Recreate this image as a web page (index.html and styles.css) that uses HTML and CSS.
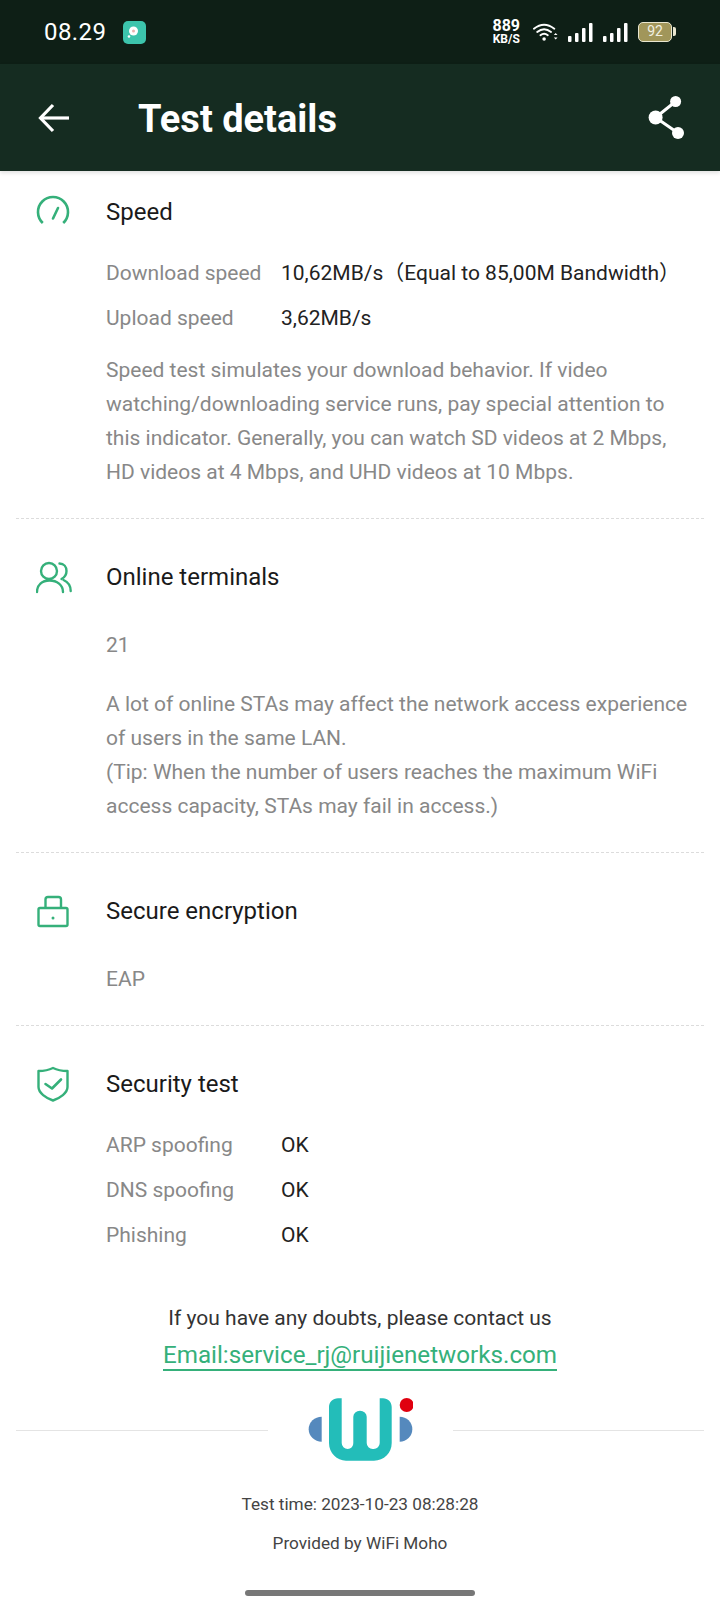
FILE: index.html
```html
<!DOCTYPE html>
<html lang="en">
<head>
  <meta charset="UTF-8">
  <title>Test details</title>
  <link rel="stylesheet" href="styles.css">
</head>
<body>
  <div class="status-bar">
    <div class="status-left">
      <span class="clock">08.29</span>
      <svg class="app-dot" width="23" height="23" viewBox="0 0 23 23">
        <rect width="23" height="23" rx="5" fill="#3cc4ac"/>
        <circle cx="10.500" cy="10" r="4.500" fill="#fff"/>
        <circle cx="10.500" cy="10" r="1.500" fill="#e8b4b0"/>
        <circle cx="6" cy="15.500" r="1.300" fill="#fff"/>
      </svg>
    </div>
    <div class="status-right">
      <div class="net-speed"><span>889</span><span class="net-unit">KB/S</span></div>
      <svg class="wifi" width="25" height="19" viewBox="0 0 27 20" fill="none" stroke="#fff" stroke-linecap="round">
        <path d="M1 6C8 0.500 16 0.500 23 6" stroke-width="2"/>
        <path d="M4.500 9.500C9.500 5.500 14.500 5.500 19.500 9.500" stroke-width="2"/>
        <path d="M8 13C10.500 11 13.500 11 16 13" stroke-width="2"/>
        <circle cx="12" cy="17" r="1.900" fill="#fff" stroke="none"/>
        <path d="M24.500 10.500l-2 2.200h4zM24.500 17.500l-2-2.200h4z" fill="#fff" stroke="none"/>
      </svg>
      <svg width="25" height="19" viewBox="0 0 25 19" fill="#fff">
        <rect x="0" y="13" width="3.500" height="6" rx="1"/>
        <rect x="7" y="10" width="3.500" height="9" rx="1"/>
        <rect x="14" y="5" width="3.500" height="14" rx="1"/>
        <rect x="21" y="0" width="3.500" height="19" rx="1"/>
      </svg>
      <svg class="signal-second" width="25" height="19" viewBox="0 0 25 19" fill="#fff">
        <rect x="0" y="13" width="3.500" height="6" rx="1"/>
        <rect x="7" y="10" width="3.500" height="9" rx="1"/>
        <rect x="14" y="5" width="3.500" height="14" rx="1"/>
        <rect x="21" y="0" width="3.500" height="19" rx="1"/>
      </svg>
      <div class="battery"><span class="battery-level">92</span><span class="battery-tip"></span></div>
    </div>
  </div>

  <header class="nav-bar">
    <svg class="back-icon" width="32" height="30" viewBox="0 0 32 30" fill="none" stroke="#fff" stroke-width="3.200">
      <path d="M31 15H3"/>
      <path d="M15 2L2.500 15L15 28"/>
    </svg>
    <h1 class="nav-title">Test details</h1>
    <svg class="share-icon" width="38" height="44" viewBox="0 0 38 44" fill="#fff">
      <path d="M7.600 21.500L27.600 5.500M7.600 21.500L30 37" stroke="#fff" stroke-width="3"/>
      <circle cx="7.600" cy="21.500" r="7"/>
      <circle cx="27.600" cy="5.500" r="5.500"/>
      <circle cx="30" cy="37" r="6"/>
    </svg>
  </header>

  <main>
    <section class="section">
      <div class="section-head">
        <svg class="section-icon" width="34" height="34" viewBox="0 0 34 34" fill="none" stroke="#35b07a" stroke-width="2.600">
          <path d="M6.800 28A15 15 0 1 1 27.200 28"/>
          <path d="M17 23.500L22 13" stroke-linecap="round"/>
        </svg>
        <h2 class="section-title">Speed</h2>
      </div>
      <div class="rows">
        <div class="row"><span class="row-label">Download speed</span><span class="row-value">10,62MB/s（Equal to 85,00M Bandwidth）</span></div>
        <div class="row"><span class="row-label">Upload speed</span><span class="row-value">3,62MB/s</span></div>
      </div>
      <p class="note note-tight">Speed test simulates your download behavior. If video watching/downloading service runs, pay special attention to this indicator. Generally, you can watch SD videos at 2 Mbps, HD videos at 4 Mbps, and UHD videos at 10 Mbps.</p>
    </section>

    <section class="section">
      <div class="section-head">
        <svg class="section-icon" width="38" height="34" viewBox="0 0 38 34" fill="none" stroke="#35b07a" stroke-width="2.400" stroke-linecap="round">
          <circle cx="13" cy="11" r="8"/>
          <path d="M1 32C1 25 6 20.500 13.500 20.500C21 20.500 27 25 27 32"/>
          <path d="M23.500 3.500C28 3.500 30.500 7 30.500 11C30.500 14.500 28.500 17.500 25.500 19"/>
          <path d="M27.500 20C32 22 34.700 26 34.700 31"/>
        </svg>
        <h2 class="section-title">Online terminals</h2>
      </div>
      <p class="value">21</p>
      <p class="note">A lot of online STAs may affect the network access experience of users in the same LAN.<br>(Tip: When the number of users reaches the maximum WiFi access capacity, STAs may fail in access.)</p>
    </section>

    <section class="section">
      <div class="section-head">
        <svg class="section-icon" width="34" height="34" viewBox="0 0 34 34" fill="none" stroke="#35b07a" stroke-width="2.400">
          <rect x="2.500" y="14" width="29" height="18" rx="1.500"/>
          <path d="M9.500 14V5.500A2.500 2.500 0 0 1 12 3H22.500A2.500 2.500 0 0 1 25 5.500V14"/>
          <circle cx="17" cy="24" r="1.500" fill="#35b07a" stroke="none"/>
        </svg>
        <h2 class="section-title">Secure encryption</h2>
      </div>
      <p class="value">EAP</p>
    </section>

    <section class="section section-last">
      <div class="section-head">
        <svg class="section-icon" width="34" height="36" viewBox="0 0 34 36" fill="none" stroke="#35b07a" stroke-width="2.400" stroke-linecap="round" stroke-linejoin="round">
          <path d="M2.500 5C8 5 13 4 17 2C21 4 26 5 31.500 5V21C31.500 27 24 32 17 34.500C10 32 2.500 27 2.500 21Z"/>
          <path d="M9.500 18L16 22.500L25 13.500" stroke-width="2.600"/>
        </svg>
        <h2 class="section-title">Security test</h2>
      </div>
      <div class="rows">
        <div class="row"><span class="row-label">ARP spoofing</span><span class="row-value">OK</span></div>
        <div class="row"><span class="row-label">DNS spoofing</span><span class="row-value">OK</span></div>
        <div class="row"><span class="row-label">Phishing</span><span class="row-value">OK</span></div>
      </div>
    </section>
  </main>

  <footer class="footer">
    <p class="contact">If you have any doubts, please contact us</p>
    <a class="email" href="#">Email:service_rj@ruijienetworks.com</a>
    <div class="brand">
      <span class="brand-rule"></span>
      <svg class="brand-logo" width="105" height="64" viewBox="0 0 105 64">
        <path d="M21 9C21 4 25 .3 30 .3H33.700V45a6 6 0 0 0 6 6a5.600 5.600 0 0 0 5.600-6V18.700a6.700 6 0 0 1 13.400 0V45a6 6 0 0 0 6 6h1a6 6 0 0 0 6-6V.3H75C80 .3 83.700 4 83.700 9V45C83.700 55 76 62.700 66 62.700H38C29 62.700 21 55 21 45Z" fill="#23bdb9"/>
        <path d="M13.700 18.700A13 12.500 0 0 0 13.700 43.700Z" fill="#5589bd"/>
        <path d="M91.700 18.700A12.600 12.500 0 0 1 91.700 43.700Z" fill="#5589bd"/>
        <circle cx="98.700" cy="7" r="7" fill="#e0000f"/>
      </svg>
      <span class="brand-rule"></span>
    </div>
    <p class="meta">Test time: 2023-10-23 08:28:28</p>
    <p class="meta">Provided by WiFi Moho</p>
  </footer>
  <div class="home-bar"></div>
</body>
</html>
```

FILE: styles.css
```css
* {
  box-sizing: border-box;
}
body {
  margin: 0;
  width: 720px;
  height: 1600px;
  overflow: hidden;
  background: #fff;
  color: #222;
  font-family: Roboto, "Noto Sans CJK SC", sans-serif;
}
h1, h2, p {
  margin: 0;
  font-weight: normal;
}

/* status bar */
.status-bar {
  height: 64px;
  background: #0e1f16;
  color: #fff;
  display: flex;
  justify-content: space-between;
  align-items: center;
  padding: 0 48px 0 44px;
}
.status-left {
  display: flex;
  align-items: center;
  gap: 17px;
}
.clock {
  font-size: 24px;
  letter-spacing: 0.4px;
}
.status-right {
  display: flex;
  align-items: center;
  gap: 11px;
}
.net-speed {
  display: flex;
  flex-direction: column;
  align-items: center;
  font-size: 16px;
  font-weight: 700;
  line-height: 14px;
  margin-right: 2px;
}
.net-unit {
  font-size: 12px;
  line-height: 12px;
}
.wifi {
  margin-right: -1px;
}
.signal-second {
  margin-left: -1px;
}
.battery {
  position: relative;
  width: 34px;
  height: 20px;
  margin-left: -1px;
  border-radius: 5px;
  background: #a1965a;
  border: 1.500px solid #e9e6cf;
  font-size: 14px;
  line-height: 17px;
  text-align: center;
  color: #f2f0e0;
}
.battery-tip {
  position: absolute;
  right: -4.500px;
  top: 4px;
  width: 3px;
  height: 9px;
  border-radius: 0 2px 2px 0;
  background: #e9e6cf;
}

/* nav */
.nav-bar {
  height: 107px;
  background: #152c21;
  display: flex;
  align-items: center;
  padding: 0 34px 0 38px;
  box-shadow: 0 2px 4px rgba(0,0,0,0.12);
  position: relative;
}
.nav-title {
  flex: 1;
  margin-left: 68px;
  padding-top: 2px;
  font-size: 38px;
  font-weight: 700;
  color: #fff;
}

/* sections */
.section {
  margin: 0 16px;
  padding: 36px 0 29px;
  border-bottom: 1px dashed #dcdcdc;
}
.section:first-child {
  padding-top: 19px;
}
.section-last {
  border-bottom: 0;
  padding-bottom: 0;
}
.section-head {
  display: flex;
  align-items: center;
  height: 44px;
  position: relative;
  padding-left: 90px;
}
.section-icon {
  position: absolute;
  left: 20px;
  top: 50%;
  transform: translateY(-50%);
}
.section-title {
  font-size: 24px;
  color: #1a1a1a;
}
.rows {
  margin-top: 16px;
  padding-left: 90px;
}
.row {
  display: flex;
  height: 45px;
  align-items: center;
  font-size: 21px;
  line-height: 24px;
}
.row-label {
  width: 175px;
  color: #888;
  flex-shrink: 0;
}
.row-value {
  color: #222;
  white-space: nowrap;
}
.value {
  margin-top: 29px;
  padding-left: 90px;
  font-size: 21px;
  line-height: 34px;
  color: #888;
}
.note {
  margin-top: 25px;
  padding: 0 14px 0 90px;
  font-size: 21px;
  line-height: 34px;
  color: #888;
}
.note-tight {
  margin-top: 13px;
}

/* footer */
.footer {
  margin-top: 44px;
  display: flex;
  flex-direction: column;
  align-items: center;
}
.contact {
  font-size: 21px;
  line-height: 34px;
  color: #333;
}
.email {
  margin-top: 7px;
  font-size: 24.200px;
  line-height: 27px;
  color: #35b07a;
  text-decoration: none;
  border-bottom: 2px solid #35b07a;
}
.brand {
  width: 688px;
  margin-top: 27px;
  display: flex;
  align-items: center;
}
.brand-rule {
  flex: 1;
  height: 1px;
  background: #e4e4e4;
}
.brand-logo {
  margin: 0 40px;
}
.meta {
  font-size: 17.200px;
  line-height: 24px;
  color: #444;
  margin-bottom: 15px;
}
.brand + .meta {
  margin-top: 30px;
}
.home-bar {
  position: absolute;
  left: 245px;
  top: 1590px;
  width: 230px;
  height: 6px;
  border-radius: 3px;
  background: #777;
}
```
